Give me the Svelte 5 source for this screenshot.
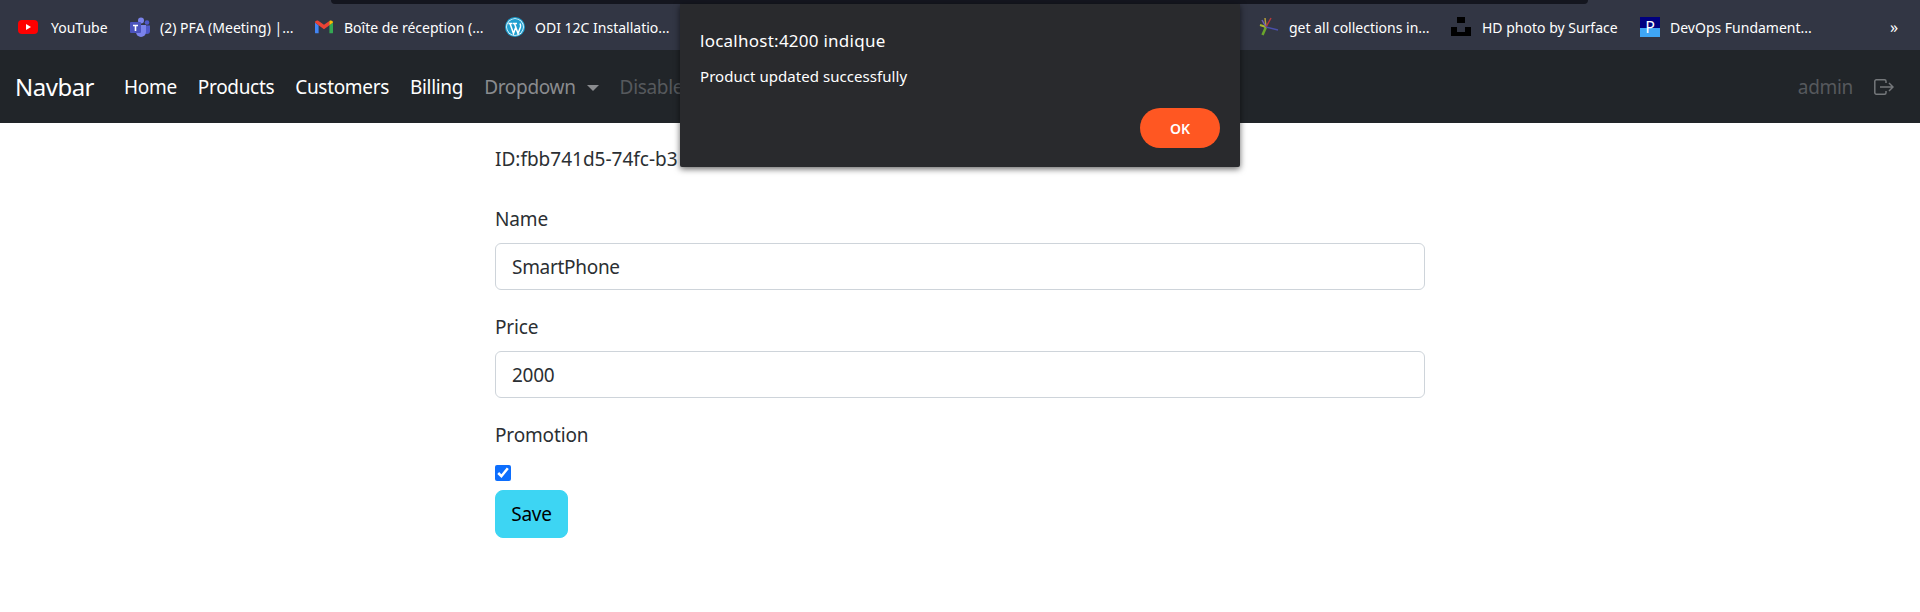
<script>
  const left = [
    { t: 'YouTube', w: 112, g: 33, k: 'yt' },
    { t: '(2) PFA (Meeting) |...', w: 185, g: 30, k: 'teams' },
    { t: 'Boîte de réception (...', w: 190, g: 29, k: 'gm' },
    { t: 'ODI 12C Installatio...', w: 200, g: 30, k: 'wp' }
  ];
  const right = [
    { t: 'get all collections in...', w: 192, g: 30, k: 'star' },
    { t: 'HD photo by Surface', w: 189, g: 31, k: 'un' },
    { t: 'DevOps Fundament...', w: 250, g: 30, k: 'p' }
  ];
  const links = ['Home', 'Products', 'Customers', 'Billing'];
</script>

{#snippet icon(k)}
  {#if k === 'yt'}
    <svg width="20" height="14" viewBox="0 0 20 14"><rect width="20" height="14" rx="4" fill="#f00"/><path d="M8 4l5 3-5 3z" fill="#fff"/></svg>
  {:else if k === 'teams'}
    <svg width="20" height="20" viewBox="0 0 20 20"><circle cx="11" cy="3.500" r="3" fill="#7b83eb"/><circle cx="17" cy="5.500" r="2.300" fill="#5059c9"/><path d="M14 8.500h6v5.500a3 3 0 0 1-6 0z" fill="#5059c9"/><path d="M6 8h10v7a5 5 0 0 1-10 0z" fill="#7b83eb"/><rect y="5" width="11" height="11" rx="1" fill="#4b53bc"/><path d="M3 7.800h5v1.400H6.300V14H4.700V9.200H3z" fill="#fff"/></svg>
  {:else if k === 'gm'}
    <svg width="18" height="16" viewBox="0 0 20 16"><path d="M0 3v11a1 1 0 0 0 1 1h3V6z" fill="#4285f4"/><path d="M16 15h3a1 1 0 0 0 1-1V3l-4 3z" fill="#34a853"/><path d="M0 3l4 3 6 4.500L16 6V1.200L10 5.500 4 1.200C2.200 0 0 1 0 3z" fill="#ea4335"/><path d="M16 1.200C17.800 0 20 1 20 3l-4 3z" fill="#fbbc04"/></svg>
  {:else if k === 'wp'}
    <svg width="20" height="20" viewBox="0 0 20 20"><circle cx="10" cy="10" r="10" fill="#1f9fcf"/><circle cx="10" cy="10" r="8.800" fill="#fff"/><circle cx="10" cy="10" r="8" fill="#1f9fcf"/><path d="M3.500 6.500h4M8 6.500h4M5 6.500l3.500 10L11 9.500M9.500 6.500l3.500 10 2.500-6.500c.5-1.500 0-2.500-.5-3.500" stroke="#fff" stroke-width="1.500" fill="none"/></svg>
  {:else if k === 'star'}
    <svg width="20" height="20" viewBox="0 0 20 20" fill="none" stroke-width="1.500"><path d="M7 10L3.500 18" stroke="#6aa52c" stroke-width="2.500"/><path d="M7 10L1 8" stroke="#a5b82c" stroke-width="2"/><path d="M7 10L6 1" stroke="#b5a03a"/><path d="M7 10L3 3" stroke="#6b5fb0"/><path d="M7 10L12 1" stroke="#b83a3a"/><path d="M7 10L19 13" stroke="#4a4fa8"/></svg>
  {:else if k === 'un'}
    <svg width="20" height="20" viewBox="0 0 20 20" fill="#000"><rect x="6" width="8" height="6"/><path d="M0 10h6v5h8v-5h6v9H0z"/></svg>
  {:else}
    <svg width="20" height="20" viewBox="0 0 20 20"><rect width="20" height="11" fill="#00007f"/><rect y="11" width="20" height="9" fill="#3fa6f5"/><text x="10" y="16" text-anchor="middle" class="ptext">P</text></svg>
  {/if}
{/snippet}

<div class="page">
  <div class="chromeTop"></div>
  <div class="bookmarks">
    <div class="bmgroup">
      {#each left as b}
        <div class="bm" style="width:{b.w}px"><span class="ic" style="width:{b.g}px">{@render icon(b.k)}</span><span>{b.t}</span></div>
      {/each}
    </div>
    <div class="bmgroup">
      {#each right as b}
        <div class="bm" style="width:{b.w}px"><span class="ic" style="width:{b.g}px">{@render icon(b.k)}</span><span>{b.t}</span></div>
      {/each}
      <div class="more">»</div>
    </div>
  </div>
  <nav class="navbar">
    <span class="brand">Navbar</span>
    {#each links as l}<span class="link">{l}</span>{/each}
    <span class="link muted">Dropdown<i class="caret"></i></span>
    <span class="link disabled">Disabled</span>
    <span class="spacer"></span>
    <span class="link disabled admin">admin</span>
    <svg class="logout" width="20" height="16" viewBox="0 0 20 16" fill="none" stroke="#75787b" stroke-width="1.500"><path d="M12 4V2.300a1.500 1.500 0 0 0-1.500-1.500H2.300A1.500 1.500 0 0 0 .8 2.300v11.400a1.500 1.500 0 0 0 1.500 1.500h8.200a1.500 1.500 0 0 0 1.500-1.500V12"/><path d="M6 8h13M15 4l4 4-4 4"/></svg>
  </nav>
  <main class="form">
    <div class="id">ID:fbb741d5-74fc-b3</div>
    <label class="lbl" for="n">Name</label>
    <input id="n" class="ctl" value="SmartPhone" />
    <label class="lbl" for="p">Price</label>
    <input id="p" class="ctl" value="2000" />
    <label class="lbl" for="c">Promotion</label>
    <input id="c" class="chk" type="checkbox" checked />
    <button class="save">Save</button>
  </main>
  <div class="dialog">
    <div class="dtitle">localhost:4200 indique</div>
    <div class="dmsg">Product updated successfully</div>
    <div class="dact"><button class="ok">OK</button></div>
  </div>
</div>

<style>
  :global(body) { margin: 0; background: #fff; }
  .page {
    position: relative;
    width: 1920px;
    height: 612px;
    overflow: hidden;
    font-family: "Noto Sans", "Open Sans", sans-serif;
  }
  .chromeTop {
    position: relative;
    z-index: 1;
    height: 4px;
    margin: 0 332px 0 331px;
    background: #14161f;
    border-radius: 0 0 6px 6px;
  }
  .bookmarks {
    height: 46px;
    background: #323644;
    color: #fff;
    font-size: 14px;
    display: flex;
    justify-content: space-between;
    align-items: center;
    padding: 0 0 0 18px;
    box-sizing: border-box;
    box-shadow: 0 -4px 0 #323644;
  }
  .bmgroup { display: flex; align-items: center; }
  .bm { display: flex; align-items: center; white-space: nowrap; letter-spacing: 0; }
  .ic { height: 20px; display: flex; align-items: center; flex: none; }
  .more { width: 30px; font-size: 16px; }
  .ptext { fill: #fff; font: 16px "Noto Sans", sans-serif; }
  .navbar {
    height: 73px;
    background: #212529;
    display: flex;
    align-items: center;
    padding: 0 26px 0 15px;
    box-sizing: border-box;
    color: #fff;
  }
  .brand { font-size: 24px; letter-spacing: -0.5px; margin-right: 30px; }
  .link { font-size: 19px; letter-spacing: -0.32px; margin-right: 21px; white-space: nowrap; }
  .muted { color: #8a8c8f; }
  .disabled { color: #56595d; }
  .spacer { flex: 1; }
  .admin { margin-right: 21px; }
  .caret {
    display: inline-block;
    margin-left: 11px;
    vertical-align: 3px;
    border-top: 6px solid #8a8c8f;
    border-left: 6px solid transparent;
    border-right: 6px solid transparent;
  }
  .form {
    width: 930px;
    margin-left: 495px;
    color: #2b2f33;
    display: flex;
    flex-direction: column;
    align-items: flex-start;
  }
  .id { font-size: 19px; letter-spacing: 0; margin-top: 22px; height: 28px; line-height: 28px; margin-bottom: 32px; }
  .lbl { font-size: 19px; letter-spacing: -0.15px; height: 28px; line-height: 28px; margin-bottom: 10px; }
  .ctl {
    width: 100%;
    box-sizing: border-box;
    height: 47px;
    border: 1px solid #ced4da;
    border-radius: 6px;
    padding: 0 16px;
    font: 19px "Noto Sans", sans-serif;
    letter-spacing: -0.3px;
    color: #2b2f33;
    margin-bottom: 23px;
    background: #fff;
  }
  .chk { width: 16px; height: 16px; margin: 6px 0 9px; accent-color: #0d6efd; }
  .save {
    width: 73px;
    height: 48px;
    background: #3dd5f3;
    border: 1px solid #3dd5f3;
    border-radius: 8px;
    color: #000;
    font: 19px "Noto Sans", sans-serif;
    letter-spacing: -0.3px;
    padding: 0;
  }
  .dialog {
    position: absolute;
    z-index: 2;
    left: 680px;
    top: 4px;
    width: 560px;
    height: 163px;
    background: #292a2d;
    color: #fff;
    border-radius: 0 0 2px 2px;
    box-shadow: 0 2px 6px rgba(0,0,0,.6);
    padding: 25px 20px 19px;
    box-sizing: border-box;
    display: flex;
    flex-direction: column;
  }
  .dtitle { font-size: 17px; letter-spacing: 0.25px; line-height: 24px; }
  .dmsg { font-size: 15px; letter-spacing: 0.05px; line-height: 20px; margin-top: 13px; }
  .dact { margin-top: auto; display: flex; justify-content: flex-end; }
  .ok {
    width: 80px;
    height: 40px;
    border: 0;
    border-radius: 20px;
    background: #ff5722;
    color: #fff;
    font: 600 14px "Noto Sans", sans-serif;
    padding: 0;
  }
</style>
